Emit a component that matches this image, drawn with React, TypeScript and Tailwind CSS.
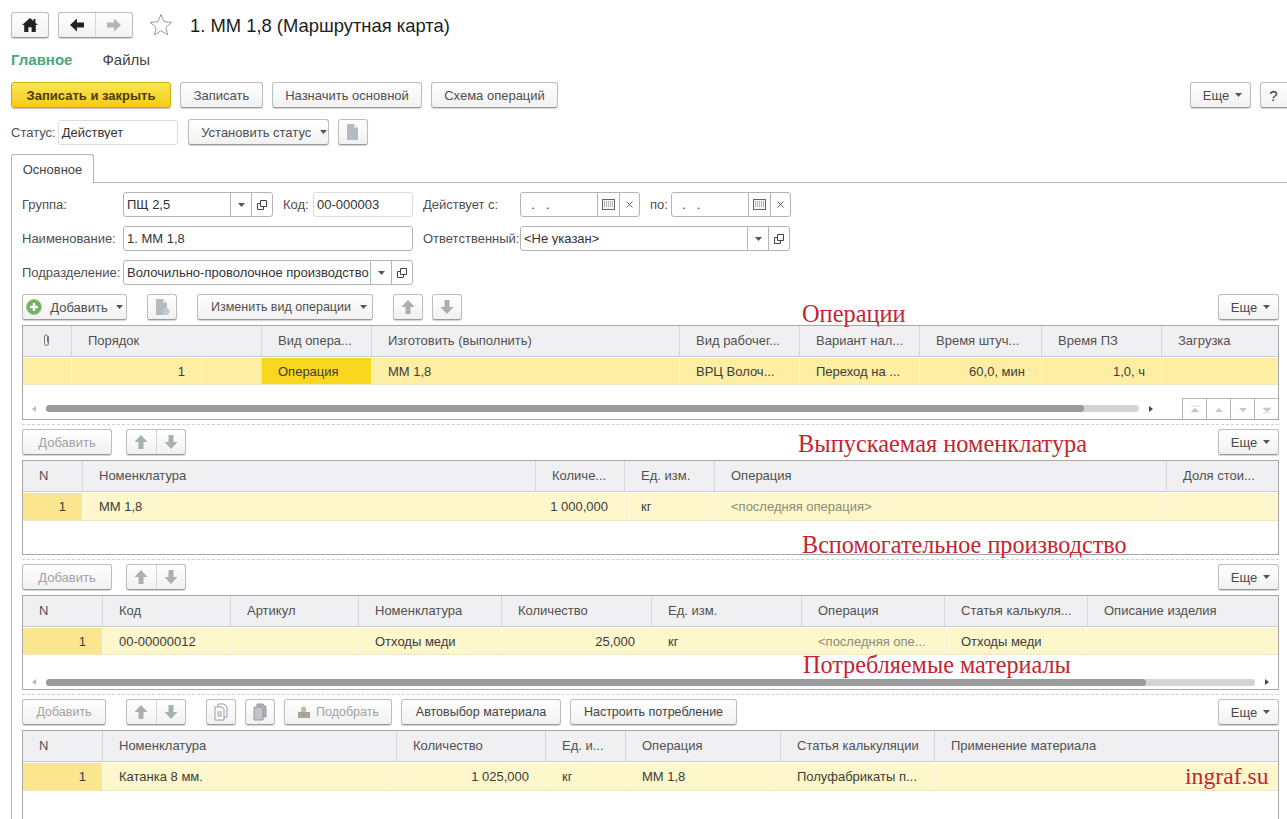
import type { ReactNode } from "react";

const DISABLED = "#a9b0b3";

function Caret({ color = "#555" }: { color?: string }) {
  return (
    <svg width="7" height="4" viewBox="0 0 7 4" className="shrink-0">
      <path d="M0 0h7L3.5 4z" fill={color} />
    </svg>
  );
}

function ArrowIcon({ dir, color = "#222", size = 16 }: { dir: "left" | "right" | "up" | "down"; color?: string; size?: number }) {
  const rotate = { left: 0, right: 180, up: 90, down: 270 }[dir];
  return (
    <svg width={size} height={size} viewBox="0 0 16 16" style={{ transform: `rotate(${rotate}deg)` }}>
      <path d="M1 8l7-6.5V5.5h7v5H8v4z" fill={color} />
    </svg>
  );
}

function HomeIcon() {
  return (
    <svg width="16" height="14" viewBox="0 0 16 14">
      <path d="M8 0L0 7h2.2v7h4.2V9.2h3.2V14h4.2V7H16l-2.6-2.3V1h-2v1.9z" fill="#222" />
    </svg>
  );
}

function StarIcon() {
  return (
    <svg width="24" height="23" viewBox="0 0 24 23">
      <path d="M12 1.5l3.1 7.2 7.6.7-5.8 5 1.8 7.4L12 17.8l-6.7 4 1.8-7.4-5.8-5 7.6-.7z" fill="none" stroke="#9a9a9a" strokeWidth="1" />
    </svg>
  );
}

function OpenIcon() {
  return (
    <svg width="12" height="12" viewBox="0 0 12 12">
      <path d="M4.5 1.5h6v6h-6zM4.5 4.5h-3v6h6v-3" fill="none" stroke="#444" strokeWidth="1" />
    </svg>
  );
}

function CalendarIcon() {
  return (
    <svg width="13" height="11" viewBox="0 0 13 11">
      <rect x="0.5" y="0.5" width="12" height="10" fill="#f4f4f4" stroke="#666" />
      <path d="M2 3h9M2 5h9M2 7h9" stroke="#777" strokeWidth="1" strokeDasharray="1 1" />
    </svg>
  );
}

function CrossIcon() {
  return (
    <svg width="7" height="7" viewBox="0 0 7 7">
      <path d="M.5.5l6 6M6.5.5l-6 6" stroke="#666" strokeWidth="1" />
    </svg>
  );
}

function ClipIcon() {
  return (
    <svg width="9" height="14" viewBox="0 0 9 14" className="ml-[3px]">
      <path d="M6.5 3v7.5a2 2 0 0 1-4 0V3a1.6 1.6 0 0 1 3 0v6.5" fill="none" stroke="#777" strokeWidth="1" />
    </svg>
  );
}

function DocIcon({ plus }: { plus?: boolean }) {
  return (
    <svg width="16" height="18" viewBox="0 0 16 18">
      <path d="M2 1h7l4 4v12H2z" fill="#b4bcc2" />
      <path d="M9 1v4h4z" fill="#dfe3e6" />
      {plus && <circle cx="12" cy="13.5" r="3.5" fill="#c3cace" />}
    </svg>
  );
}

function CopyIcon({ filled }: { filled?: boolean }) {
  return (
    <svg width="16" height="18" viewBox="0 0 16 18">
      <path d="M5 1h6l3 3v10H5z" fill={filled ? "#b0b0ae" : "#fff"} stroke="#8f9ba3" />
      <path d="M2 4h7l2 2v11H2z" fill={filled ? "#c4c4c2" : "#fff"} stroke="#8f9ba3" />
      {!filled && <path d="M4 9h5M4 11h5M4 13h5" stroke="#8f9ba3" />}
    </svg>
  );
}

function PickIcon() {
  return (
    <svg width="14" height="14" viewBox="0 0 14 14">
      <path d="M1 7h12v6H1z" fill="#a8a49a" />
      <path d="M4 7V3l3-2 2 2v4z" fill="#c0bcb2" />
    </svg>
  );
}

function PlusIcon() {
  return (
    <svg width="16" height="16" viewBox="0 0 16 16">
      <circle cx="8" cy="8" r="7.5" fill="#72b160" stroke="#9ac98d" />
      <path d="M8 4v8M4 8h8" stroke="#fff" strokeWidth="2.4" />
    </svg>
  );
}

function Btn({ className = "", children }: { className?: string; children: ReactNode }) {
  return (
    <div
      className={`flex h-[26px] shrink-0 items-center justify-center rounded-[3px] border border-[#bdbdbd] border-b-[#9a9a9a] bg-gradient-to-b from-white to-[#f1f1f1] shadow-[0_1px_1px_rgba(0,0,0,0.18)] ${className}`}
    >
      {children}
    </div>
  );
}

function MoreBtn({ className = "" }: { className?: string }) {
  return (
    <Btn className={`ml-auto w-[61px] gap-[6px] pl-1 text-[#4a4a4a] ${className}`}>
      Еще <Caret />
    </Btn>
  );
}

function AddBtn({ width }: { width: string }) {
  return <Btn className={`${width} text-[#a2a2a2]`}>Добавить</Btn>;
}

function UpDown({ className = "" }: { className?: string }) {
  return (
    <Btn className={`w-[60px] ${className}`}>
      <span className="flex h-full flex-1 items-center justify-center border-r border-[#d6d6d6]">
        <ArrowIcon dir="up" color={DISABLED} />
      </span>
      <span className="flex h-full flex-1 items-center justify-center">
        <ArrowIcon dir="down" color={DISABLED} />
      </span>
    </Btn>
  );
}

function Field({ className = "", children, text }: { className?: string; children?: ReactNode; text?: string }) {
  return (
    <div className={`flex h-[25px] shrink-0 items-center rounded-[3px] border border-[#b4b4b4] bg-white text-[#333] ${className}`}>
      <span className="min-w-0 flex-1 truncate pl-[3px]">{text}</span>
      {children}
    </div>
  );
}

function FieldBtn({ width = "w-[21px]", children }: { width?: string; children: ReactNode }) {
  return <span className={`flex h-full ${width} shrink-0 items-center justify-center border-l border-[#b4b4b4]`}>{children}</span>;
}

function DateField() {
  return (
    <Field text={"\u00a0\u00a0.\u00a0\u00a0\u00a0."} className="w-[120px]">
      <FieldBtn width="w-[22px]"><CalendarIcon /></FieldBtn>
      <FieldBtn width="w-[20px]"><CrossIcon /></FieldBtn>
    </Field>
  );
}

function Dashed() {
  return <div className="my-[4px] h-px border-t border-dashed border-[#cfcfcf]" />;
}

type Cell = { t?: string; right?: boolean; className?: string };

function Table({
  headCols,
  rowCols,
  head,
  cells,
  rowBg,
  rowH = "h-[28px]",
  children,
  height = "h-[95px]",
}: {
  headCols: string;
  rowCols: string;
  head: ReactNode[];
  cells: Cell[];
  rowBg: string;
  rowH?: string;
  children?: ReactNode;
  height?: string;
}) {
  return (
    <div className={`mt-[5px] flex ${height} flex-col overflow-hidden border border-[#a8a8a8]`}>
      <div className={`grid ${headCols} h-[31px] shrink-0 border-b border-[#cdcdcd] bg-[#f0f0f2]`}>
        {head.map((h, i) => (
          <div key={i} className="flex items-center truncate border-l border-[#d8d8d8] pb-[2px] pl-[16px] text-[#505050] first:border-l-0">
            {h}
          </div>
        ))}
      </div>
      <div className={`grid ${rowCols} ${rowH} shrink-0 border-t border-b border-white border-b-[#efe7c0] ${rowBg}`}>
        {cells.map((c, i) => (
          <div
            key={i}
            className={`flex items-center truncate border-l border-white/40 text-[#3c3c3c] first:border-l-0 ${c.right ? "justify-end pr-[16px]" : "pl-[16px]"} ${c.className ?? ""}`}
          >
            {c.t}
          </div>
        ))}
      </div>
      {children}
    </div>
  );
}

function ScrollBar({ thumb, nav, height = "h-[21px]" }: { thumb: string; nav?: boolean; height?: string }) {
  return (
    <div className={`mt-auto flex ${height} shrink-0 items-center`}>
      <svg width="4" height="6" viewBox="0 0 4 6" className="ml-[9px] shrink-0">
        <path d="M4 0v6L0 3z" fill="#bbb" />
      </svg>
      <div className="ml-[10px] h-[7px] flex-1 rounded-full bg-[#d4d4d4]">
        <div className={`h-full rounded-full bg-[#9b9b9b] ${thumb}`} />
      </div>
      <svg width="4" height="6" viewBox="0 0 4 6" className="ml-[10px] shrink-0">
        <path d="M0 0v6l4-3z" fill="#444" />
      </svg>
      {nav ? (
        <div className="ml-[29px] flex h-full w-[96px] shrink-0 border-t border-l border-[#b5b5b5]">
          {["M1 1h8M1 7L5 3l4 4z", "M1 7L5 3l4 4z", "M1 3h8L5 7z", "M1 3h8L5 7zM1 8h8"].map((d, i) => (
            <div key={i} className="flex flex-1 items-center justify-center border-l border-[#b5b5b5] first:border-l-0">
              <svg width="10" height="9" viewBox="0 0 10 9">
                <path d={d} fill="#c8c8c8" stroke={i === 0 || i === 3 ? "#c8c8c8" : "none"} strokeWidth="0.6" />
              </svg>
            </div>
          ))}
        </div>
      ) : (
        <div className="w-[9px] shrink-0" />
      )}
    </div>
  );
}

function Note({ className, children }: { className: string; children: ReactNode }) {
  return (
    <div className={`absolute whitespace-nowrap text-[24.4px] leading-[26px] text-[#c4252f] [font-family:'Liberation_Serif',serif] ${className}`}>
      {children}
    </div>
  );
}

export default function App() {
  return (
    <div className="relative h-[819px] w-[1287px] overflow-hidden bg-white text-[13px] leading-none text-[#4f4f4f] [font-family:'Liberation_Sans',Arial,sans-serif]">
      {/* Шапка формы */}
      <div className="flex h-[48px] items-start pl-[11px] pt-[12px]">
        <Btn className="h-[25px] w-[38px]"><HomeIcon /></Btn>
        <Btn className="ml-[9px] h-[25px] w-[75px]">
          <span className="flex h-full flex-1 items-center justify-center border-r border-[#d6d6d6]"><ArrowIcon dir="left" /></span>
          <span className="flex h-full flex-1 items-center justify-center"><ArrowIcon dir="right" color="#b5b5b5" /></span>
        </Btn>
        <span className="ml-[16px] mt-[1px]"><StarIcon /></span>
        <span className="ml-[17px] mt-[5px] text-[18.4px] text-[#1c1c1c]">1. ММ 1,8 (Маршрутная карта)</span>
      </div>

      <div className="flex h-[22px] items-center pl-[11px] text-[15px]">
        <span className="font-bold text-[#46a87c]">Главное</span>
        <span className="ml-[30px] text-[#444]">Файлы</span>
      </div>

      <div className="mt-[12px] flex gap-[9px] px-[11px]">
        <div className="flex h-[26px] w-[160px] items-center justify-center rounded-[3px] border border-[#d2ae0c] bg-gradient-to-b from-[#fbe54f] to-[#f6cb10] font-bold text-[#4a3d05] shadow-[0_1px_1px_rgba(0,0,0,0.25)]">
          Записать и закрыть
        </div>
        <Btn className="w-[83px]">Записать</Btn>
        <Btn className="w-[150px]">Назначить основной</Btn>
        <Btn className="w-[127px]">Схема операций</Btn>
        <MoreBtn />
        <Btn className="-mr-[31px] w-[47px] pr-[20px] text-[15px] text-[#333]">?</Btn>
      </div>

      <div className="mt-[11px] flex items-center pl-[11px]">
        <span>Статус:</span>
        <Field text="Действует" className="ml-[2px] w-[120px] border-[#dcdcdc]" />
        <Btn className="ml-[10px] h-[25px] w-[141px] gap-[9px] pl-[12px]">Установить статус <Caret /></Btn>
        <Btn className="ml-[9px] h-[25px] w-[30px]"><DocIcon /></Btn>
      </div>

      {/* Вкладка */}
      <div className="relative z-10 ml-[11px] mt-[9px] flex h-[29px] w-[83px] items-center justify-center rounded-t-[3px] border border-b-0 border-[#b5b5b5] bg-white pt-px text-[#444]">
        Основное
      </div>

      <div className="-mt-px ml-[11px] border-l border-t border-[#b5b5b5] pl-[10px] pr-[8px] pt-[9px]">
        <div className="flex items-center">
          <span className="w-[101px]">Группа:</span>
          <Field text="ПЩ 2,5" className="w-[150px]">
            <FieldBtn><Caret /></FieldBtn>
            <FieldBtn><OpenIcon /></FieldBtn>
          </Field>
          <span className="ml-[10px] w-[30px]">Код:</span>
          <Field text="00-000003" className="w-[100px] border-[#dcdcdc]" />
          <span className="ml-[10px] w-[97px]">Действует с:</span>
          <DateField />
          <span className="ml-[10px] w-[21px]">по:</span>
          <DateField />
        </div>
        <div className="mt-[9px] flex items-center">
          <span className="w-[101px]">Наименование:</span>
          <Field text="1. ММ 1,8" className="w-[290px]" />
          <span className="ml-[10px] w-[97px]">Ответственный:</span>
          <Field text="<Не указан>" className="w-[270px]">
            <FieldBtn><Caret /></FieldBtn>
            <FieldBtn><OpenIcon /></FieldBtn>
          </Field>
        </div>
        <div className="mt-[9px] flex items-center">
          <span className="w-[101px]">Подразделение:</span>
          <Field text="Волочильно-проволочное производство" className="w-[290px]">
            <FieldBtn><Caret /></FieldBtn>
            <FieldBtn><OpenIcon /></FieldBtn>
          </Field>
        </div>

        {/* Операции */}
        <div className="mt-[9px] flex">
          <Btn className="w-[105px] gap-[8px]"><PlusIcon /> Добавить <Caret /></Btn>
          <Btn className="ml-[20px] w-[30px]"><DocIcon plus /></Btn>
          <Btn className="ml-[20px] w-[176px] gap-[9px] pl-[8px] text-[12.5px]">Изменить вид операции <Caret /></Btn>
          <Btn className="ml-[20px] w-[30px]"><ArrowIcon dir="up" color={DISABLED} /></Btn>
          <Btn className="ml-[9px] w-[30px]"><ArrowIcon dir="down" color={DISABLED} /></Btn>
          <MoreBtn />
        </div>
        <Table
          headCols="grid-cols-[48px_190px_110px_308px_120px_120px_122px_120px_1fr]"
          rowCols="grid-cols-[48px_130px_60px_110px_308px_120px_120px_122px_120px_1fr]"
          head={[<ClipIcon key="clip" />, "Порядок", "Вид опера...", "Изготовить (выполнить)", "Вид рабочег...", "Вариант нал...", "Время штуч...", "Время ПЗ", "Загрузка"]}
          rowBg="bg-[#fdeea3]"
          cells={[
            {},
            { t: "1", right: true },
            {},
            { t: "Операция", className: "bg-[#f9d71f]" },
            { t: "ММ 1,8" },
            { t: "ВРЦ Волоч..." },
            { t: "Переход на ..." },
            { t: "60,0, мин", right: true },
            { t: "1,0, ч", right: true },
            {},
          ]}
        >
          <ScrollBar thumb="w-[95%]" nav />
        </Table>

        <Dashed />

        {/* Выпускаемая номенклатура */}
        <div className="flex">
          <AddBtn width="w-[90px]" />
          <UpDown className="ml-[14px]" />
          <MoreBtn />
        </div>
        <Table
          headCols="grid-cols-[59px_453px_89px_90px_452px_1fr]"
          rowCols="grid-cols-[59px_453px_89px_90px_452px_1fr]"
          head={["N", "Номенклатура", "Количе...", "Ед. изм.", "Операция", "Доля стои..."]}
          rowBg="bg-[#fef7cc]"
          rowH="h-[29px]"
          cells={[
            { t: "1", right: true, className: "bg-[#fbe690]" },
            { t: "ММ 1,8" },
            { t: "1 000,000", right: true },
            { t: "кг" },
            { t: "<последняя операция>", className: "!text-[#8b8b7a]" },
            {},
          ]}
        />

        <Dashed />

        {/* Вспомогательное производство */}
        <div className="flex">
          <AddBtn width="w-[90px]" />
          <UpDown className="ml-[14px]" />
          <MoreBtn />
        </div>
        <Table
          headCols="grid-cols-[79px_128px_128px_143px_150px_150px_143px_143px_1fr]"
          rowCols="grid-cols-[79px_128px_128px_143px_150px_150px_143px_143px_1fr]"
          head={["N", "Код", "Артикул", "Номенклатура", "Количество", "Ед. изм.", "Операция", "Статья калькуля...", "Описание изделия"]}
          rowBg="bg-[#fef7cc]"
          cells={[
            { t: "1", right: true, className: "bg-[#fbe690]" },
            { t: "00-00000012" },
            {},
            { t: "Отходы меди" },
            { t: "25,000", right: true },
            { t: "кг" },
            { t: "<последняя опе...", className: "!text-[#8b8b7a]" },
            { t: "Отходы меди" },
            {},
          ]}
        >
          <ScrollBar thumb="w-[91%]" height="h-[14px]" />
        </Table>

        <Dashed />

        {/* Потребляемые материалы */}
        <div className="flex text-[12.5px]">
          <AddBtn width="w-[84px]" />
          <UpDown className="ml-[20px]" />
          <Btn className="ml-[20px] w-[30px]"><CopyIcon /></Btn>
          <Btn className="ml-[9px] w-[30px]"><CopyIcon filled /></Btn>
          <Btn className="ml-[9px] w-[108px] gap-[5px] text-[#a2a2a2]"><PickIcon /> Подобрать</Btn>
          <Btn className="ml-[9px] w-[160px] text-[#444]">Автовыбор материала</Btn>
          <Btn className="ml-[9px] w-[167px] text-[#444]">Настроить потребление</Btn>
          <MoreBtn className="text-[13px]" />
        </div>
        <Table
          height="h-[120px]"
          headCols="grid-cols-[79px_294px_149px_80px_155px_154px_1fr]"
          rowCols="grid-cols-[79px_294px_149px_80px_155px_154px_1fr]"
          head={["N", "Номенклатура", "Количество", "Ед. и...", "Операция", "Статья калькуляции", "Применение материала"]}
          rowBg="bg-[#fef7cc]"
          rowH="h-[29px]"
          cells={[
            { t: "1", right: true, className: "bg-[#fbe690]" },
            { t: "Катанка 8 мм." },
            { t: "1 025,000", right: true },
            { t: "кг" },
            { t: "ММ 1,8" },
            { t: "Полуфабрикаты п..." },
            {},
          ]}
        />
      </div>

      {/* Подписи поверх формы */}
      <Note className="left-[802px] top-[301px]">Операции</Note>
      <Note className="left-[798px] top-[431px]">Выпускаемая номенклатура</Note>
      <Note className="left-[802px] top-[532px] !text-[24.2px]">Вспомогательное производство</Note>
      <Note className="left-[803px] top-[652px] !text-[24.2px]">Потребляемые материалы</Note>
      <Note className="left-[1185px] top-[763px] !text-[23.7px]">ingraf.su</Note>
    </div>
  );
}
